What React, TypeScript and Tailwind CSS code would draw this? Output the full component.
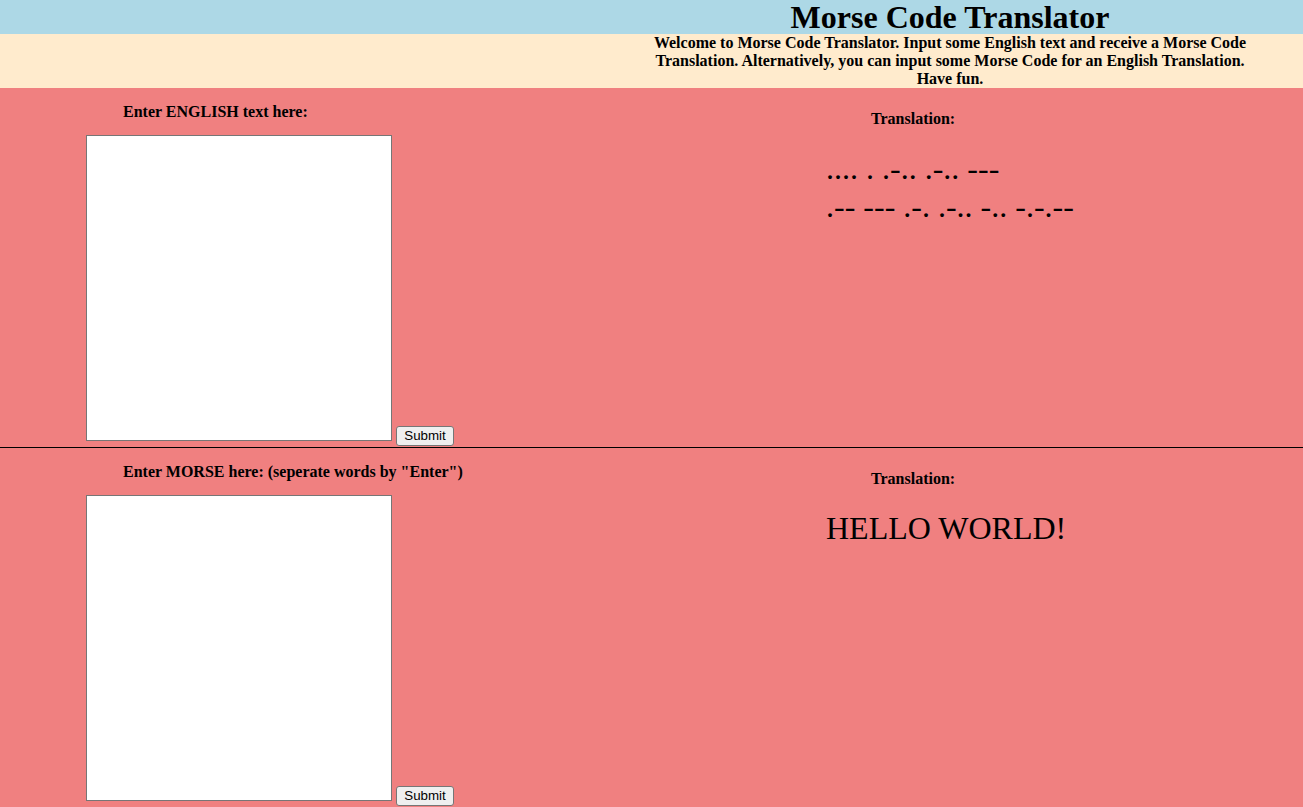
import { useState } from "react";

function Section({
  label,
  result,
  big,
}: {
  label: string;
  result: string[];
  big?: boolean;
}) {
  const [value, setValue] = useState("");

  return (
    <div className="flex border-b border-black pb-[1px]">
      {/* input side */}
      <div className="w-[826px] shrink-0 pt-[15px]">
        <h4 className="ml-[123px] text-[16px] font-bold leading-[18px]">{label}</h4>
        <div className="ml-[86px] mt-[14px] flex items-end">
          <textarea
            value={value}
            onChange={(e) => setValue(e.target.value)}
            className="mb-[5px] h-[306px] w-[306px] resize-none border border-[#767676] bg-white outline-none"
          />
          <button
            type="button"
            className="ml-[4px] h-[20px] w-[58px] rounded-[3px] border border-[#767676] bg-[#efefef] text-[13.33px] leading-[18px] text-black [font-family:'Liberation_Sans',Arial,sans-serif]"
          >
            Submit
          </button>
        </div>
      </div>

      {/* translation side */}
      <div className="pt-[22px]">
        <h4 className="ml-[45px] text-[16px] font-bold leading-[18px]">Translation:</h4>
        <div className={`mt-[21px] text-[32px] leading-[38px] ${big ? "" : "whitespace-pre"}`}>
          {result.map((line, i) => (
            <p key={i}>{line}</p>
          ))}
        </div>
      </div>
    </div>
  );
}

export default function App() {
  return (
    <div className="min-h-screen bg-[#f08080] text-black [font-family:'Liberation_Serif','Times_New_Roman',serif]">
      {/* Header */}
      <div className="h-[34px] bg-[#add8e6]">
        <h1 className="ml-[640px] w-[620px] text-center text-[32px] font-bold leading-[34px]">
          Morse Code Translator
        </h1>
      </div>
      <div className="h-[54px] bg-[#ffebcd]">
        <h4 className="ml-[640px] w-[620px] text-center text-[16px] font-bold leading-[18px]">
          Welcome to Morse Code Translator. Input some English text and receive a Morse Code
          Translation. Alternatively, you can input some Morse Code for an English Translation.
          Have fun.
        </h4>
      </div>

      <Section
        label="Enter ENGLISH text here:"
        result={[".... . .-.. .-.. ---", ".-- --- .-. .-.. -.. -.-.--"]}
      />
      <Section
        label={'Enter MORSE here: (seperate words by "Enter")'}
        result={["HELLO WORLD!"]}
        big
      />
    </div>
  );
}
